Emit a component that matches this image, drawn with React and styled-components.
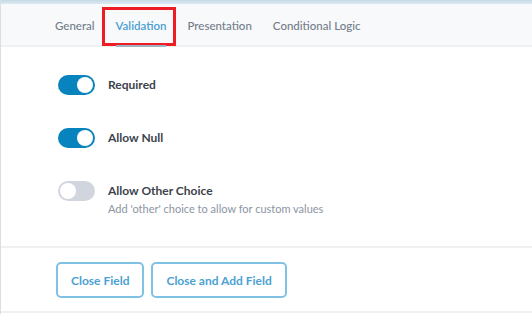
import React from 'react';
import styled, { createGlobalStyle } from 'styled-components';

const GlobalStyle = createGlobalStyle`
  body {
    margin: 0;
    background: #ffffff;
    font-family: Lato, "Noto Sans", "Liberation Sans", sans-serif;
  }
`;

const Panel = styled("div")({
  width: 532,
  height: 314,
  boxSizing: "border-box",
  borderLeft: "1px solid #dcdee2",
  display: "flex",
  flexDirection: "column",
  overflow: "hidden",
});

const TopStrip = styled("div")({
  height: 4,
  background: "linear-gradient(#c6dbe7, #dbe9f1)",
});

const TabBar = styled("div")({
  height: 43,
  boxSizing: "border-box",
  background: "#f7f9fb",
  borderBottom: "2px solid #eef0f2",
  display: "flex",
  alignItems: "stretch",
  paddingLeft: 54,
  gap: 21,
});

const Tab = styled("div")`
  position: relative;
  display: flex;
  align-items: center;
  font-size: 11.5px;
  color: ${p => (p.$active ? "#4a9fd2" : "#737d8a")};
  font-weight: ${p => (p.$active ? 600 : 500)};
  padding-top: 2px;
  &::after {
    content: "";
    display: ${p => (p.$active ? "block" : "none")};
    position: absolute;
    left: 0;
    right: 0;
    bottom: -2px;
    height: 2px;
    background: #9fb3c1;
  }
`;

const Highlight = styled("div")({
  position: "absolute",
  left: -14,
  right: -10,
  top: 3,
  bottom: -1,
  border: "3px solid #ee1c24",
  pointerEvents: "none",
});

const Body = styled("div")({
  display: "flex",
  flexDirection: "column",
  padding: "28px 0 0 57px",
  gap: 33,
  height: 201,
  boxSizing: "border-box",
  borderBottom: "2px solid #eef0f2",
});

const Row = styled("div")({
  display: "flex",
  alignItems: "flex-start",
  gap: 13,
});

const Switch = styled("div")`
  width: 37px;
  height: 20px;
  border-radius: 10px;
  flex-shrink: 0;
  background: ${p => (p.$on ? "#0783be" : "#d1d6de")};
  position: relative;
  &::after {
    content: "";
    position: absolute;
    top: 2px;
    ${p => (p.$on ? "right: 2px;" : "left: 2px;")}
    width: 16px;
    height: 16px;
    border-radius: 50%;
    background: #ffffff;
  }
`;

const LabelWrap = styled("div")({
  display: "flex",
  flexDirection: "column",
  gap: 4,
  paddingTop: 2,
});

const Label = styled("div")({
  fontSize: 12,
  fontWeight: 700,
  color: "#3d434c",
});

const Hint = styled("div")({
  fontSize: 11,
  color: "#8b95a3",
});

const Footer = styled("div")({
  display: "flex",
  gap: 7,
  padding: "14px 0 0 55px",
  height: 65,
  boxSizing: "border-box",
  borderBottom: "2px solid #eef0f2",
});

const Button = styled("button")({
  height: 36,
  padding: "0 13px",
  background: "#ffffff",
  border: "2px solid #80c2e4",
  borderRadius: 5,
  color: "#4ba1d3",
  fontFamily: "inherit",
  fontSize: 12,
  fontWeight: 700,
});

const options = [
  { label: "Required", on: true },
  { label: "Allow Null", on: true },
  { label: "Allow Other Choice", on: false, hint: "Add 'other' choice to allow for custom values" },
];

const tabs = ["General", "Validation", "Presentation", "Conditional Logic"];

export default function App() {
  return (
    <>
      <GlobalStyle />
      <Panel>
        <TopStrip />
        <TabBar>
          {tabs.map(t => (
            <Tab key={t} $active={t === "Validation"}>
              {t}
              {t === "Validation" && <Highlight />}
            </Tab>
          ))}
        </TabBar>
        <Body>
          {options.map(o => (
            <Row key={o.label}>
              <Switch $on={o.on} />
              <LabelWrap>
                <Label>{o.label}</Label>
                {o.hint && <Hint>{o.hint}</Hint>}
              </LabelWrap>
            </Row>
          ))}
        </Body>
        <Footer>
          <Button>Close Field</Button>
          <Button>Close and Add Field</Button>
        </Footer>
      </Panel>
    </>
  );
}
